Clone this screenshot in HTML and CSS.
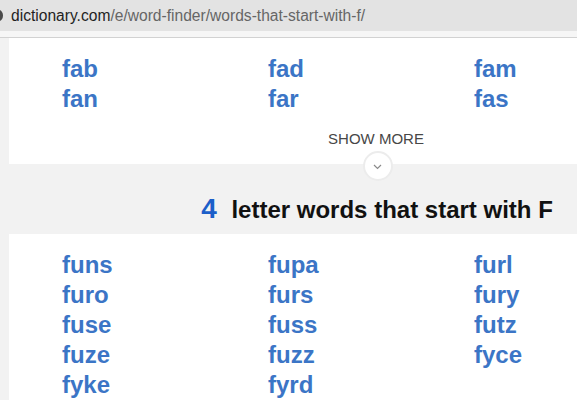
FILE: index.html
```html
<!DOCTYPE html>
<html>
<head>
<meta charset="utf-8">
<link rel="stylesheet" href="styles.css">
</head>
<body>
<div class="urlbar">
  <svg class="edge" width="3" height="11" viewBox="0 0 3 11"><path d="M0 0 Q3 2 3 5.5 Q3 9 0 11 Z" fill="#4a4a4a"/></svg>
  <span class="domain">dictionary.com</span><span class="path">/e/word-finder/words-that-start-with-f/</span>
</div>
<div class="urlgap"></div>
<div class="page">
  <div class="side"></div>
  <div class="main">
    <div class="words">
      <a>fab</a><a>fad</a><a>fam</a>
      <a>fan</a><a>far</a><a>fas</a>
    </div>
    <div class="more">
      <div class="more-label">SHOW MORE</div>
      <div class="more-btn">
        <svg width="9" height="6" viewBox="0 0 9 6"><polyline points="1,1 4.5,4.5 8,1" fill="none" stroke="#8a8a8a" stroke-width="1.2"/></svg>
      </div>
    </div>
    <div class="band">
      <h2 class="heading"><span class="num">4</span> letter words that start with F</h2>
    </div>
    <div class="words">
      <a>funs</a><a>fupa</a><a>furl</a>
      <a>furo</a><a>furs</a><a>fury</a>
      <a>fuse</a><a>fuss</a><a>futz</a>
      <a>fuze</a><a>fuzz</a><a>fyce</a>
      <a>fyke</a><a>fyrd</a>
    </div>
  </div>
</div>
</body>
</html>
```

FILE: styles.css
```css
html, body {
  margin: 0;
  padding: 0;
  background: #ffffff;
  font-family: "Liberation Sans", Arial, sans-serif;
}

.urlbar {
  height: 31px;
  background: #e3e3e3;
  display: flex;
  align-items: center;
  font-size: 15.6px;
  line-height: 18px;
  white-space: nowrap;
  padding-top: 1px;
  box-sizing: border-box;
}

.edge {
  margin-right: 8px;
  margin-top: -2px;
  flex: none;
}

.domain {
  color: #1f1f1f;
}

.path {
  color: #666666;
}

.urlgap {
  height: 6px;
  background: #f6f6f6;
  border-bottom: 1px solid #d2d2d2;
}

.page {
  display: flex;
}

.side {
  width: 9px;
  flex: none;
  background: #f2f2f2;
}

.main {
  flex: 1;
  min-width: 0;
  background: #ffffff;
}

.words {
  display: grid;
  grid-template-columns: 206px 206px 1fr;
  padding: 16px 0 0 53px;
  font-size: 24px;
  line-height: 30px;
  font-weight: 700;
}

.words a {
  color: #3b75c6;
  text-decoration: none;
}

.more {
  padding: 16px 0 0 166px;
  display: flex;
  flex-direction: column;
  align-items: center;
  position: relative;
  z-index: 1;
  height: 34px;
}

.more-label {
  font-size: 15px;
  line-height: 18px;
  color: #474747;
}

.more-btn {
  margin-top: 3px;
  margin-left: 3px;
  width: 26px;
  height: 26px;
  border-radius: 50%;
  border: 2px solid #ececec;
  background: #ffffff;
  display: flex;
  align-items: center;
  justify-content: center;
  flex: none;
}

.more-btn svg {
  margin-top: 1px;
}

.band {
  background: #f2f2f2;
  height: 70px;
  padding: 30px 0 0 168px;
  box-sizing: border-box;
}

.heading {
  margin: 0;
  text-align: center;
  font-size: 24px;
  line-height: 32px;
  font-weight: 700;
  color: #111111;
  white-space: nowrap;
}

.num {
  font-size: 28px;
  line-height: 1;
  color: #1c5fc9;
  margin-right: 8px;
}
```
